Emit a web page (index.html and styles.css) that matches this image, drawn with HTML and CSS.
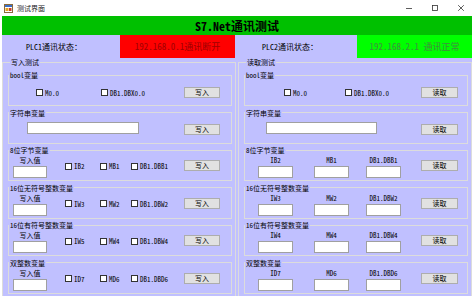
FILE: index.html
```html
<!DOCTYPE html>
<html lang="zh-CN">
<head>
  <meta charset="UTF-8">
  <title>测试界面</title>
  <link rel="stylesheet" href="styles.css">
</head>
<body>

  <div class="titlebar">
    <svg class="app-icon" viewBox="0 0 9 9">
      <rect x="0.5" y="0.5" width="8" height="8" fill="#fff" stroke="#8a6a3a"/>
      <rect x="1" y="1" width="7" height="2" fill="#3a6fc8"/>
      <rect x="1.5" y="4" width="3" height="3" fill="#e8a020"/>
      <rect x="5" y="4" width="2.5" height="3" fill="#c83a2a"/>
    </svg>
    <span class="title">测试界面</span>
    <div class="controls">
      <span><svg viewBox="0 0 8 8"><path d="M1 4.5h6" stroke="#333" stroke-width="0.8"/></svg></span>
      <span><svg viewBox="0 0 8 8"><rect x="1.5" y="1.5" width="5" height="5" fill="none" stroke="#333" stroke-width="0.8"/></svg></span>
      <span><svg viewBox="0 0 8 8"><path d="M1.2 1.2l5.6 5.6M6.8 1.2l-5.6 5.6" stroke="#333" stroke-width="0.8"/></svg></span>
    </div>
  </div>

  <div class="client">
    <div class="banner">S7.Net通讯测试</div>

    <div class="status-row">
      <div class="status-label">PLC1通讯状态：</div>
      <div class="status-value bad">192.168.0.1通讯断开</div>
      <div class="status-label second">PLC2通讯状态：</div>
      <div class="status-value ok">192.168.2.1 通讯正常</div>
    </div>

    <div class="panels">
      <!-- write side -->
      <fieldset class="panel">
        <legend>写入测试</legend>

        <fieldset class="sub">
          <legend>bool变量</legend>
          <div class="row row-bool w">
            <label class="chk"><input type="checkbox">M0.0</label>
            <label class="chk"><input type="checkbox">DB1.DBX0.0</label>
            <button class="btn">写入</button>
          </div>
        </fieldset>

        <fieldset class="sub">
          <legend>字符串变量</legend>
          <div class="row row-str w">
            <input class="tb tb-w" type="text">
            <button class="btn">写入</button>
          </div>
        </fieldset>

        <fieldset class="sub">
          <legend>8位字节变量</legend>
          <div class="row row-num w">
            <div class="field"><span>写入值</span><input class="tb" type="text"></div>
            <label class="chk"><input type="checkbox">IB2</label>
            <label class="chk"><input type="checkbox">MB1</label>
            <label class="chk"><input type="checkbox">DB1.DBB1</label>
            <button class="btn">写入</button>
          </div>
        </fieldset>

        <fieldset class="sub">
          <legend>16位无符号整数变量</legend>
          <div class="row row-num w">
            <div class="field"><span>写入值</span><input class="tb" type="text"></div>
            <label class="chk"><input type="checkbox">IW3</label>
            <label class="chk"><input type="checkbox">MW2</label>
            <label class="chk"><input type="checkbox">DB1.DBW2</label>
            <button class="btn">写入</button>
          </div>
        </fieldset>

        <fieldset class="sub">
          <legend>16位有符号整数变量</legend>
          <div class="row row-num w">
            <div class="field"><span>写入值</span><input class="tb" type="text"></div>
            <label class="chk"><input type="checkbox">IW5</label>
            <label class="chk"><input type="checkbox">MW4</label>
            <label class="chk"><input type="checkbox">DB1.DBW4</label>
            <button class="btn">写入</button>
          </div>
        </fieldset>

        <fieldset class="sub">
          <legend>双整数变量</legend>
          <div class="row row-num w">
            <div class="field"><span>写入值</span><input class="tb" type="text"></div>
            <label class="chk"><input type="checkbox">ID7</label>
            <label class="chk"><input type="checkbox">MD6</label>
            <label class="chk"><input type="checkbox">DB1.DBD6</label>
            <button class="btn">写入</button>
          </div>
        </fieldset>
      </fieldset>

      <!-- read side -->
      <fieldset class="panel">
        <legend>读取测试</legend>

        <fieldset class="sub">
          <legend>bool变量</legend>
          <div class="row row-bool r">
            <label class="chk"><input type="checkbox">M0.0</label>
            <label class="chk"><input type="checkbox">DB1.DBX0.0</label>
            <button class="btn">读取</button>
          </div>
        </fieldset>

        <fieldset class="sub">
          <legend>字符串变量</legend>
          <div class="row row-str r">
            <input class="tb tb-r" type="text">
            <button class="btn">读取</button>
          </div>
        </fieldset>

        <fieldset class="sub">
          <legend>8位字节变量</legend>
          <div class="row row-num r">
            <div class="field"><span>IB2</span><input class="tb" type="text"></div>
            <div class="field"><span>MB1</span><input class="tb" type="text"></div>
            <div class="field"><span>DB1.DBB1</span><input class="tb" type="text"></div>
            <button class="btn">读取</button>
          </div>
        </fieldset>

        <fieldset class="sub">
          <legend>16位无符号整数变量</legend>
          <div class="row row-num r">
            <div class="field"><span>IW3</span><input class="tb" type="text"></div>
            <div class="field"><span>MW2</span><input class="tb" type="text"></div>
            <div class="field"><span>DB1.DBW2</span><input class="tb" type="text"></div>
            <button class="btn">读取</button>
          </div>
        </fieldset>

        <fieldset class="sub">
          <legend>16位有符号整数变量</legend>
          <div class="row row-num r">
            <div class="field"><span>IW4</span><input class="tb" type="text"></div>
            <div class="field"><span>MW4</span><input class="tb" type="text"></div>
            <div class="field"><span>DB1.DBW4</span><input class="tb" type="text"></div>
            <button class="btn">读取</button>
          </div>
        </fieldset>

        <fieldset class="sub">
          <legend>双整数变量</legend>
          <div class="row row-num r">
            <div class="field"><span>ID7</span><input class="tb" type="text"></div>
            <div class="field"><span>MD6</span><input class="tb" type="text"></div>
            <div class="field"><span>DB1.DBD6</span><input class="tb" type="text"></div>
            <button class="btn">读取</button>
          </div>
        </fieldset>
      </fieldset>
    </div>
  </div>

</body>
</html>
```

FILE: styles.css
```css
body {
  margin: 0;
  width: 474px;
  height: 296px;
  overflow: hidden;
  background: #fff;
  color: #000;
  font-family: "Noto Sans Mono CJK SC", "Noto Sans CJK SC", sans-serif;
  font-size: 7px;
}

.titlebar {
  height: 16px;
  display: flex;
  align-items: center;
}

.app-icon {
  width: 9px;
  height: 9px;
  margin: 0 4px 0 4px;
}

.title {
  font-size: 7px;
  color: #222;
}

.controls {
  margin-left: auto;
  display: flex;
}

.controls span {
  width: 26px;
  height: 16px;
  display: flex;
  align-items: center;
  justify-content: center;
}

.controls svg {
  width: 8px;
  height: 8px;
}

.client {
  margin: 0 2px;
  background: #c0c0ff;
}

.banner {
  height: 19px;
  line-height: 19px;
  background: #00c000;
  text-align: center;
  font-size: 12px;
  font-weight: bold;
}

.status-row {
  display: grid;
  grid-template-columns: 118px 115px 122px 115px;
  height: 23px;
}

.status-label {
  padding-left: 24px;
  font-size: 8px;
  line-height: 23px;
}

.status-label.second {
  padding-left: 27px;
}

.status-value {
  font-size: 9px;
  line-height: 23px;
  text-align: center;
}

.bad {
  background: #ff0000;
  color: #a00000;
}

.ok {
  background: #00ff00;
  color: #3f8f3f;
}

.panels {
  display: grid;
  grid-template-columns: 234px 234px;
  column-gap: 2px;
}

fieldset {
  margin: 0;
  min-width: 0;
  border: 1px solid #dcdcdc;
}

legend {
  font-size: 7px;
  line-height: 8px;
  padding: 0 1px;
}

.panel {
  padding: 5px 3px 3px 5px;
}

.panel > legend {
  margin-left: 2px;
}

.sub {
  box-sizing: border-box;
  height: 35px;
  margin-bottom: 2.6px;
  padding: 0;
}

.row {
  display: grid;
  align-items: start;
}

.chk {
  display: flex;
  align-items: center;
  height: 8px;
  line-height: 8px;
  white-space: nowrap;
}

.chk input {
  appearance: none;
  width: 7px;
  height: 7px;
  margin: 0 2px 0 0;
  border: 1px solid #333;
  background: #fff;
  box-sizing: border-box;
}

.btn {
  height: 11px;
  padding: 0;
  border: 1px solid #adadad;
  background: #e1e1e1;
  font-family: inherit;
  font-size: 7px;
  line-height: 9px;
  color: #000;
}

.tb {
  box-sizing: border-box;
  height: 12px;
  padding: 0;
  border: 1px solid #a0a0a0;
  background: #fff;
}

/* bool rows */
.row-bool {
  margin-top: 8px;
  height: 11px;
  align-items: center;
}

.row-bool.w {
  grid-template-columns: 65px 83px 36px;
  padding-left: 27px;
}

.row-bool.r {
  grid-template-columns: 61px 76px 37px;
  padding-left: 39px;
}

/* string rows */
.row-str {
  margin-top: 5px;
}

.row-str .btn {
  margin-top: 2px;
}

.row-str.w {
  grid-template-columns: 157px 36px;
  padding-left: 18px;
}

.row-str.r {
  grid-template-columns: 155px 37px;
  padding-left: 21px;
}

.tb-w {
  width: 112px;
}

.tb-r {
  width: 111px;
}

/* number rows */
.row-num {
  margin-top: 2px;
}

.row-num.w {
  grid-template-columns: 52px 35px 31px 53px 36px;
  padding-left: 4px;
}

.row-num.r {
  grid-template-columns: 56px 52px 55px 37px;
  padding-left: 13px;
}

.row-num .chk {
  margin-top: 6px;
}

.row-num .btn {
  margin-top: 4px;
}

.field {
  display: flex;
  flex-direction: column;
  width: 35px;
}

.row-num.w .field {
  width: 34px;
}

.field span {
  height: 10px;
  line-height: 8px;
  text-align: center;
  white-space: nowrap;
}

.field .tb {
  width: 100%;
}
```
